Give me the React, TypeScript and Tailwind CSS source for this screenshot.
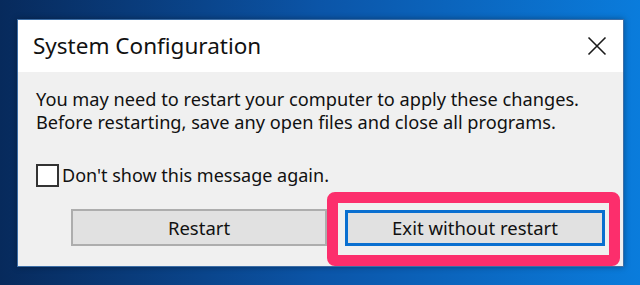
export default function App() {
  return (
    <div
      className="relative w-[640px] h-[285px] overflow-hidden bg-gradient-to-r from-[#072a5c] via-[#0b55a8] to-[#0a7cdc] pt-[19px] pl-[17px]"
      style={{ fontFamily: '"Noto Sans", "Open Sans", sans-serif' }}
    >
      {/* Dialog */}
      <div className="w-[607px] h-[248px] flex flex-col border border-[#3d6ea6] bg-[#f0f0f0] shadow-[0_0_6px_rgba(0,0,0,0.35)]">
        {/* Title bar */}
        <div className="h-[52px] shrink-0 bg-white flex items-center justify-between pl-[15px] pr-[16px]">
          <span className="text-[22.5px] text-[#111]">System Configuration</span>
          <svg width="20" height="20" viewBox="0 0 20 20" className="text-[#1a1a1a]">
            <path d="M1.5 1.5 L18.5 18.5 M18.5 1.5 L1.5 18.5" stroke="currentColor" strokeWidth="1.6" fill="none" />
          </svg>
        </div>

        {/* Body */}
        <div className="flex-1 flex flex-col pl-[18px] pt-[16px]">
          <p className="text-[18.2px] leading-[23px] text-[#111]">
            You may need to restart your computer to apply these changes.
            <br />
            Before restarting, save any open files and close all programs.
          </p>

          <label className="mt-[30px] flex items-center gap-[3px]">
            <span className="w-[23px] h-[23px] border-2 border-[#333] bg-white shrink-0" />
            <span className="text-[18px] leading-[23px] text-[#111]">
              Don't show this message again.
            </span>
          </label>

          <div className="mt-[22px] flex items-center gap-[18px] pl-[35px]">
            <button className="w-[256px] h-[37px] bg-[#e1e1e1] border-2 border-[#adadad] text-[18.5px] text-[#111]">
              Restart
            </button>
            <button className="w-[260px] h-[36px] bg-[#e1e1e1] border-[3px] border-[#0a6fd0] text-[18.5px] text-[#111]">
              Exit without restart
            </button>
          </div>
        </div>
      </div>

      {/* Highlight annotation */}
      <div className="absolute left-[327px] top-[192px] w-[293px] h-[74px] rounded-[8px] border-[11px] border-[#fc2e6c]" />
    </div>
  );
}
